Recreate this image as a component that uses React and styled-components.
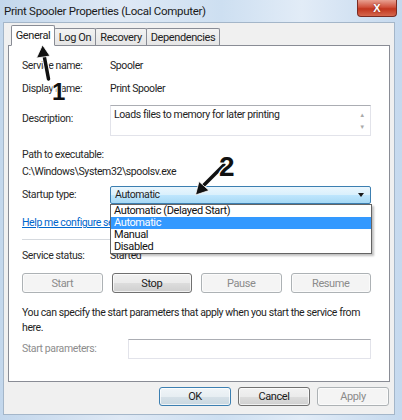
import React from "react";
import styled, { createGlobalStyle } from "styled-components";

const Global = createGlobalStyle`
  html, body { margin: 0; padding: 0; background: #cfe0f1; }
  body { font-family: "Roboto", "Liberation Sans", sans-serif; font-size: 10.5px; letter-spacing: -0.4px; color: #1e1e1e; }
  * { box-sizing: border-box; }
`;

const Window = styled.div`
  position: relative;
  width: 402px;
  height: 420px;
  overflow: hidden;
  display: flex;
  flex-direction: column;
  background: linear-gradient(90deg, #c3d7ec 0%, #dfe9f5 30%, #cddff1 55%, #e2ecf7 75%, #c5d9ee 100%);
`;

const TitleBar = styled.div`
  height: 22px;
  display: flex;
  align-items: flex-start;
  padding-left: 4px;
`;

const Title = styled.div`
  padding-top: 4px;
  font-size: 11.5px;
  letter-spacing: -0.3px;
  color: #1a1a1a;
`;

const CloseButton = styled.div`
  margin-left: auto;
  margin-right: 5px;
  width: 40px;
  height: 17px;
  border: 1px solid #7a2b22;
  border-top: none;
  border-radius: 0 0 4px 4px;
  background: linear-gradient(#e8a091 0%, #d0513c 45%, #c1351e 55%, #d5674d 100%);
  display: flex;
  align-items: center;
  justify-content: center;
  color: #fff;
  font-weight: bold;
  font-size: 11px;
  letter-spacing: 0;
  font-family: "Liberation Sans", sans-serif;
  text-shadow: 0 0 2px #7a2b22;
`;

const Body = styled.div`
  margin: 0 7px 5px 3px;
  flex: 1;
  background: #f0f0f0;
  border: 1px solid #a4b6c9;
  display: flex;
  flex-direction: column;
  padding: 1px 4px 0 4px;
`;

const Tabs = styled.div`
  display: flex;
  align-items: flex-end;
  height: 21px;
  padding-left: 4px;
  position: relative;
  z-index: 1;
`;

const Tab = styled.div`
  height: ${p => (p.$active ? "21px" : "17px")};
  width: ${p => p.$w}px;
  margin-right: -1px;
  margin-left: ${p => (p.$active ? "-1px" : "0")};
  border: 1px solid #898c95;
  border-bottom: ${p => (p.$active ? "1px solid #fff" : "none")};
  border-radius: 2px 2px 0 0;
  background: ${p => (p.$active ? "#fff" : "linear-gradient(#f3f3f3, #e5e5e5)")};
  display: flex;
  align-items: center;
  justify-content: center;
  font-size: 11px;
  color: #222;
  margin-bottom: ${p => (p.$active ? "-1px" : "0")};
  z-index: ${p => (p.$active ? 2 : 1)};
`;

const Panel = styled.div`
  background: #fff;
  border: 1px solid #898c95;
  height: 337px;
  padding: 12px 18px 0 13px;
  display: flex;
  flex-direction: column;
  position: relative;
`;

const Row = styled.div`
  display: flex;
  align-items: ${p => p.$align || "center"};
  min-height: 14px;
  margin-top: ${p => p.$mt || 0}px;
  line-height: 14px;
`;

const Label = styled.div`
  width: ${p => p.$w || 88}px;
  flex: none;
  color: ${p => (p.$disabled ? "#8d8d8d" : "#2a2a2a")};
  padding-top: ${p => p.$pt || 0}px;
`;

const Value = styled.div`
  color: #1e1e1e;
`;

const TextBox = styled.div`
  flex: 1;
  height: ${p => p.$h}px;
  border: 1px solid #e2e3ea;
  border-top-color: #abadb3;
  background: #fff;
  padding: 2px 3px;
  display: flex;
  justify-content: space-between;
  line-height: 13px;
`;

const ScrollArrows = styled.div`
  width: 10px;
  display: flex;
  flex-direction: column;
  justify-content: space-between;
  align-items: center;
  padding: 4px 0 3px;
  color: #a9a9a9;
  font-size: 6px;
  line-height: 6px;
`;

const Combo = styled.div`
  flex: 1;
  height: 18px;
  border: 1px solid #3c7fb1;
  border-radius: 2px;
  background: linear-gradient(#eaf6fd 0%, #d9f0fc 50%, #bee6fd 51%, #a7d9f5 100%);
  display: flex;
  align-items: center;
  justify-content: space-between;
  padding: 0 6px 0 4px;
  position: relative;
`;

const Caret = styled.div`
  width: 0;
  height: 0;
  border-left: 3.5px solid transparent;
  border-right: 3.5px solid transparent;
  border-top: 4px solid #1a1a1a;
`;

const DropList = styled.div`
  position: absolute;
  left: -1px;
  right: -2px;
  top: 17px;
  border: 1px solid #646464;
  background: #fff;
  box-shadow: 2px 2px 2px rgba(0, 0, 0, 0.25);
  z-index: 5;
`;

const DropItem = styled.div`
  height: 12px;
  line-height: 12px;
  padding-left: 3px;
  font-size: 11px;
  background: ${p => (p.$sel ? "#3399ff" : "transparent")};
  color: ${p => (p.$sel ? "#fff" : "#111")};
`;

const Link = styled.div`
  color: #0066cc;
  text-decoration: underline;
  white-space: nowrap;
`;

const Separator = styled.div`
  height: 1px;
  background: #d5d9de;
  margin-top: 9px;
`;

const ButtonRow = styled.div`
  display: grid;
  grid-template-columns: repeat(4, 1fr);
  column-gap: 9px;
  margin-top: 10px;
`;

const Button = styled.div`
  height: ${p => p.$h || 20}px;
  width: ${p => (p.$w ? p.$w + "px" : "auto")};
  border: 1px solid ${p => (p.$disabled ? "#adb2b5" : p.$default ? "#3c7fb1" : "#707070")};
  border-radius: 3px;
  background: ${p =>
    p.$disabled
      ? "#f4f4f4"
      : p.$default
      ? "linear-gradient(#f0f5f8 0%, #e7eef2 50%, #d6e1e8 51%, #c9d7e0 100%)"
      : "linear-gradient(#f2f2f2 0%, #ebebeb 50%, #dddddd 51%, #cfcfcf 100%)"};
  box-shadow: inset 0 0 0 1px ${p => (p.$disabled ? "#fbfbfb" : "rgba(255,255,255,0.7)")};
  color: ${p => (p.$disabled ? "#8b8b8b" : "#1a1a1a")};
  display: flex;
  align-items: center;
  justify-content: center;
  font-size: 11px;
`;

const Paragraph = styled.div`
  margin-top: 12px;
  line-height: 15px;
  color: #1e1e1e;
`;

const Footer = styled.div`
  display: flex;
  justify-content: flex-end;
  gap: 7px;
  padding: 5px 1px 0 0;
`;

const Overlay = styled.svg`
  position: absolute;
  left: 0;
  top: 0;
  pointer-events: none;
  z-index: 10;
`;

const Marker = styled.div`
  position: absolute;
  left: ${p => p.$x}px;
  top: ${p => p.$y}px;
  font-family: "Liberation Sans", "DejaVu Sans", sans-serif;
  font-weight: bold;
  font-size: ${p => p.$size}px;
  letter-spacing: 0;
  line-height: 1;
  color: #111;
  text-shadow: -1px -1px 0 #fff, 1px -1px 0 #fff, -1px 1px 0 #fff, 1px 1px 0 #fff;
  z-index: 11;
`;

export default function App() {
  return (
    <>
      <Global />
      <Window>
        <TitleBar>
          <Title>Print Spooler Properties (Local Computer)</Title>
          <CloseButton>X</CloseButton>
        </TitleBar>
        <Body>
          <Tabs>
            <Tab $active $w={44}>General</Tab>
            <Tab $w={42}>Log On</Tab>
            <Tab $w={52}>Recovery</Tab>
            <Tab $w={74}>Dependencies</Tab>
          </Tabs>
          <Panel>
            <Row $mt={1}>
              <Label>Service name:</Label>
              <Value>Spooler</Value>
            </Row>
            <Row $mt={9}>
              <Label>Display name:</Label>
              <Value>Print Spooler</Value>
            </Row>
            <Row $mt={9} $align="flex-start">
              <Label $pt={7}>Description:</Label>
              <TextBox $h={31}>
                <span>Loads files to memory for later printing</span>
                <ScrollArrows>
                  <span>▲</span>
                  <span>▼</span>
                </ScrollArrows>
              </TextBox>
            </Row>
            <Row $mt={12}>
              <Label $w={200}>Path to executable:</Label>
            </Row>
            <Row $mt={3}>
              <Value>C:\Windows\System32\spoolsv.exe</Value>
            </Row>
            <Row $mt={7}>
              <Label>Startup type:</Label>
              <Combo>
                <span>Automatic</span>
                <Caret />
                <DropList>
                  <DropItem>Automatic (Delayed Start)</DropItem>
                  <DropItem $sel>Automatic</DropItem>
                  <DropItem>Manual</DropItem>
                  <DropItem>Disabled</DropItem>
                </DropList>
              </Combo>
            </Row>
            <Row $mt={12}>
              <Link>Help me configure service startup options.</Link>
            </Row>
            <Separator />
            <Row $mt={9}>
              <Label>Service status:</Label>
              <Value>Started</Value>
            </Row>
            <ButtonRow>
              <Button $disabled>Start</Button>
              <Button>Stop</Button>
              <Button $disabled>Pause</Button>
              <Button $disabled>Resume</Button>
            </ButtonRow>
            <Paragraph>
              You can specify the start parameters that apply when you start the service from here.
            </Paragraph>
            <Row $mt={4}>
              <Label $w={106} $disabled>Start parameters:</Label>
              <TextBox $h={20} />
            </Row>
          </Panel>
          <Footer>
            <Button $default $w={72} $h={19}>OK</Button>
            <Button $w={72} $h={19}>Cancel</Button>
            <Button $disabled $w={72} $h={19}>Apply</Button>
          </Footer>
        </Body>

        <Overlay width="402" height="420" viewBox="0 0 402 420">
          <line x1="48.5" y1="79" x2="44" y2="55" stroke="#fff" strokeWidth="5.5" strokeLinecap="round" />
          <line x1="48.5" y1="79" x2="44" y2="55" stroke="#111" strokeWidth="3.5" strokeLinecap="round" />
          <polygon points="42.5,45 36.5,58 50,56" fill="#111" stroke="#fff" strokeWidth="0.8" />
          <line x1="224" y1="165" x2="202" y2="187" stroke="#fff" strokeWidth="5.5" strokeLinecap="round" />
          <line x1="224" y1="165" x2="202" y2="187" stroke="#111" strokeWidth="3.5" strokeLinecap="round" />
          <polygon points="195.5,195 199,181.5 209,190.5" fill="#111" stroke="#fff" strokeWidth="0.8" />
        </Overlay>
        <Marker $x={52} $y={80} $size={24}>1</Marker>
        <Marker $x={219} $y={153} $size={28}>2</Marker>
      </Window>
    </>
  );
}
